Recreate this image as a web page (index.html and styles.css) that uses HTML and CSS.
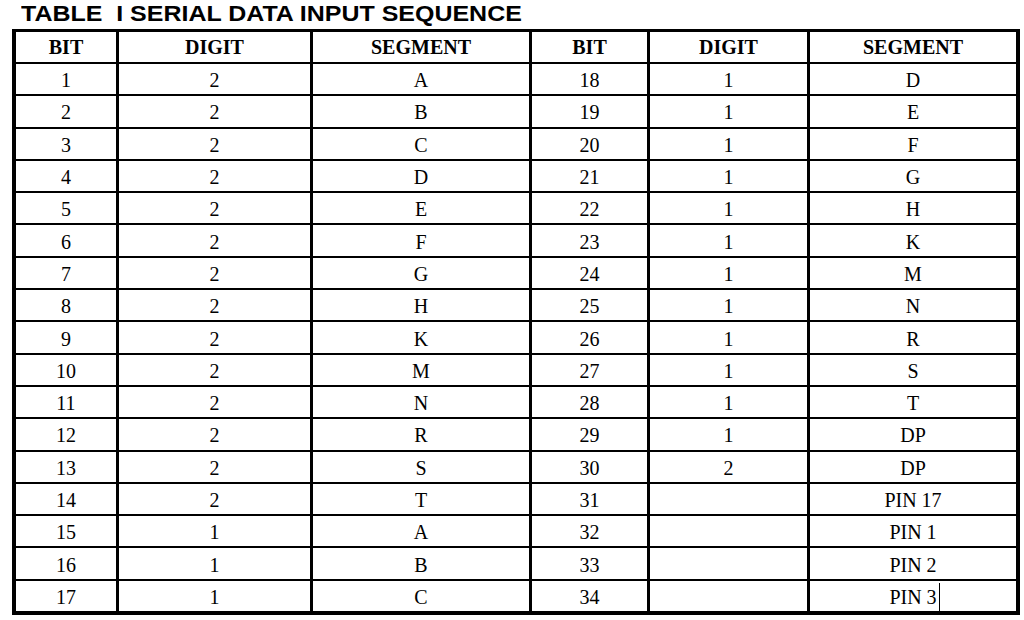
FILE: index.html
```html
<!DOCTYPE html>
<html lang="en">
<head>
<meta charset="utf-8">
<title>Table I Serial Data Input Sequence</title>
<link rel="stylesheet" href="styles.css">
</head>
<body>
<h1 class="title">TABLE&nbsp; I SERIAL DATA INPUT SEQUENCE</h1>
<div class="grid">
  <div class="cell head">BIT</div><div class="cell head">DIGIT</div><div class="cell head">SEGMENT</div><div class="cell head">BIT</div><div class="cell head">DIGIT</div><div class="cell head">SEGMENT</div>
  <div class="cell">1</div><div class="cell">2</div><div class="cell">A</div><div class="cell">18</div><div class="cell">1</div><div class="cell">D</div>
  <div class="cell">2</div><div class="cell">2</div><div class="cell">B</div><div class="cell">19</div><div class="cell">1</div><div class="cell">E</div>
  <div class="cell">3</div><div class="cell">2</div><div class="cell">C</div><div class="cell">20</div><div class="cell">1</div><div class="cell">F</div>
  <div class="cell">4</div><div class="cell">2</div><div class="cell">D</div><div class="cell">21</div><div class="cell">1</div><div class="cell">G</div>
  <div class="cell">5</div><div class="cell">2</div><div class="cell">E</div><div class="cell">22</div><div class="cell">1</div><div class="cell">H</div>
  <div class="cell">6</div><div class="cell">2</div><div class="cell">F</div><div class="cell">23</div><div class="cell">1</div><div class="cell">K</div>
  <div class="cell">7</div><div class="cell">2</div><div class="cell">G</div><div class="cell">24</div><div class="cell">1</div><div class="cell">M</div>
  <div class="cell">8</div><div class="cell">2</div><div class="cell">H</div><div class="cell">25</div><div class="cell">1</div><div class="cell">N</div>
  <div class="cell">9</div><div class="cell">2</div><div class="cell">K</div><div class="cell">26</div><div class="cell">1</div><div class="cell">R</div>
  <div class="cell">10</div><div class="cell">2</div><div class="cell">M</div><div class="cell">27</div><div class="cell">1</div><div class="cell">S</div>
  <div class="cell">11</div><div class="cell">2</div><div class="cell">N</div><div class="cell">28</div><div class="cell">1</div><div class="cell">T</div>
  <div class="cell">12</div><div class="cell">2</div><div class="cell">R</div><div class="cell">29</div><div class="cell">1</div><div class="cell">DP</div>
  <div class="cell">13</div><div class="cell">2</div><div class="cell">S</div><div class="cell">30</div><div class="cell">2</div><div class="cell">DP</div>
  <div class="cell">14</div><div class="cell">2</div><div class="cell">T</div><div class="cell">31</div><div class="cell"></div><div class="cell">PIN 17</div>
  <div class="cell">15</div><div class="cell">1</div><div class="cell">A</div><div class="cell">32</div><div class="cell"></div><div class="cell">PIN 1</div>
  <div class="cell">16</div><div class="cell">1</div><div class="cell">B</div><div class="cell">33</div><div class="cell"></div><div class="cell">PIN 2</div>
  <div class="cell">17</div><div class="cell">1</div><div class="cell">C</div><div class="cell">34</div><div class="cell"></div><div class="cell"><span class="caret">PIN 3</span></div>
</div>
</body>
</html>
```

FILE: styles.css
```css
html, body {
  margin: 0;
  padding: 0;
  background: #ffffff;
}

body {
  width: 1024px;
  height: 620px;
  overflow: hidden;
}

.title {
  width: max-content;
  margin: 0 0 4px 21px;
  padding-top: 3px;
  font-family: "Liberation Sans", Arial, sans-serif;
  font-weight: bold;
  font-size: 22px;
  line-height: 22px;
  color: #000;
  transform: scaleX(1.135);
  transform-origin: left center;
}

.grid {
  margin-left: 12px;
  width: 1008px;
  box-sizing: border-box;
  display: grid;
  grid-template-columns: 100px 191px 216px 115px 157px 206px;
  grid-template-rows: 30px repeat(17, 30.3px);
  column-gap: 3px;
  row-gap: 2px;
  padding: 3px 4px 4px 4px;
  background: #000;
}

.cell {
  background: #fff;
  display: flex;
  align-items: center;
  justify-content: center;
  padding-top: 2px;
  font-family: "Liberation Serif", "Times New Roman", serif;
  font-size: 20px;
  color: #000;
  line-height: 1;
}

.head {
  font-weight: bold;
  padding-top: 0;
}

.caret {
  position: relative;
}

.caret::after {
  content: "";
  position: absolute;
  right: -3px;
  top: -4px;
  bottom: -6px;
  border-left: 1px solid #000;
}
```
